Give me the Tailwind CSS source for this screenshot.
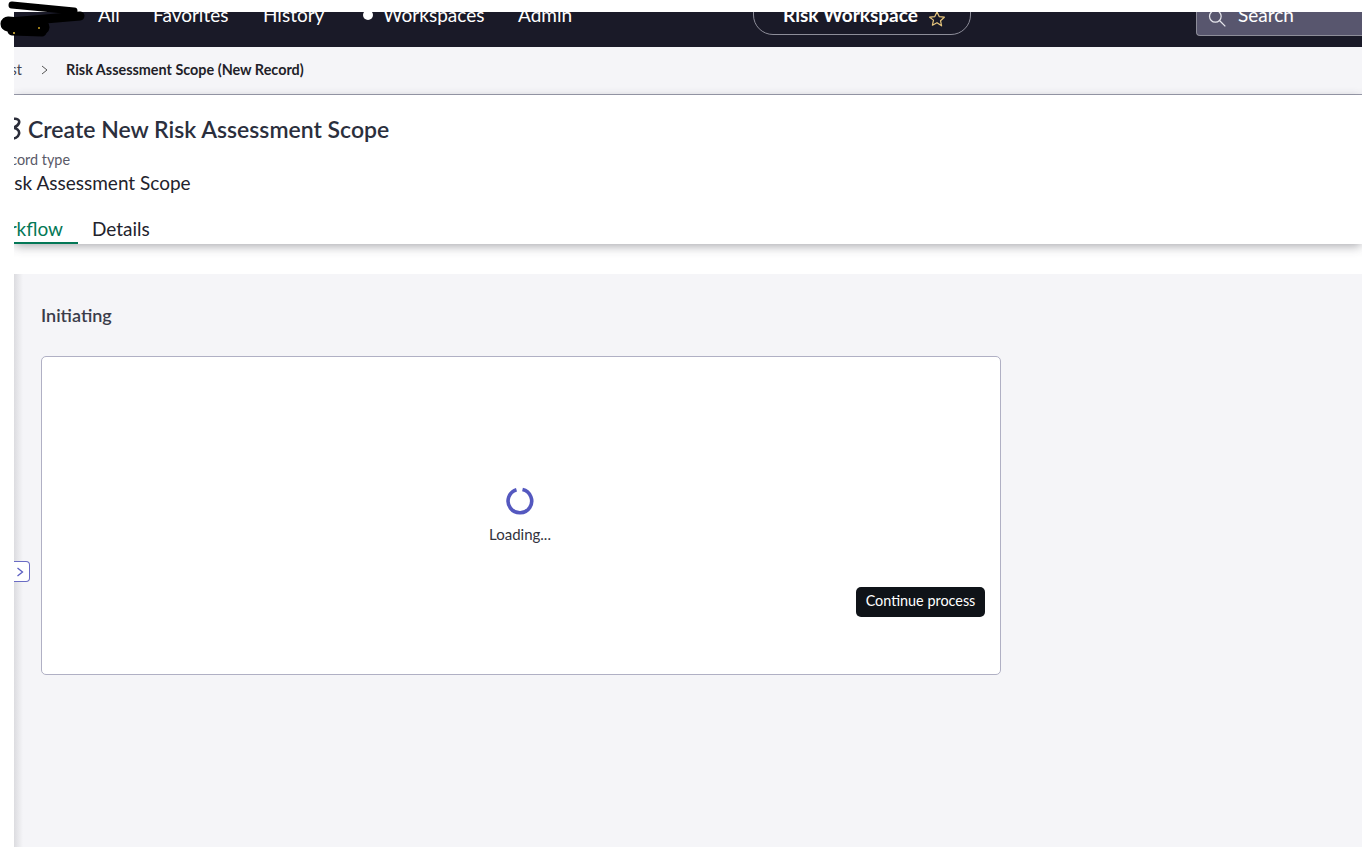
<!DOCTYPE html>
<html lang="en">
  <head>
    <meta charset="UTF-8" />
    <meta name="viewport" content="width=device-width, initial-scale=1.0" />
    <title>Create New Risk Assessment Scope</title>
    <script src="https://cdn.jsdelivr.net/npm/@tailwindcss/browser@4"></script>
  </head>
  <body class="bg-white font-['Lato','Liberation_Sans',sans-serif] h-[856px] overflow-hidden">
    <div class="relative pt-3 pl-[14px] h-[847px]">
      <div class="h-full flex flex-col overflow-hidden">
        <!-- Top nav, cut off at the top -->
        <div class="h-[35px] shrink-0 bg-[#1a1a28] overflow-hidden relative text-white text-[19px] leading-6">
          <div class="absolute left-[84px] top-[-9px] flex whitespace-nowrap">
            <span class="w-[55px]">All</span>
            <span class="w-[110px]">Favorites</span>
            <span class="w-[100px]">History</span>
            <span class="w-[155px] flex items-center"><span class="w-[10px] h-[10px] rounded-full bg-white mr-[10px]"></span>Workspaces</span>
            <span>Admin</span>
          </div>
          <div class="absolute left-[739px] top-[-20px] w-[218px] h-[43px] rounded-[20px] border border-[#8d8d99] flex items-end justify-center gap-[10px] pl-[5px] pb-[7px] font-bold">
            <span>Risk Workspace</span>
            <svg class="w-[18px] h-[18px] mb-[-1px]" viewBox="0 0 24 24" fill="none" stroke="#e8c77e" stroke-width="1.6" stroke-linejoin="round"><path d="M12 2.5l2.9 6.3 6.9.8-5.1 4.7 1.4 6.8L12 16.900 5.900 20.300l1.400-6.800L2.200 9.600l6.900-.8z"/></svg>
          </div>
          <div class="absolute left-[1182px] top-[-12px] w-[180px] h-[36px] rounded-bl-[4px] bg-[#58566e] border-l border-b border-[#8d8d99] flex items-end pl-[10px] pb-[8px] gap-[11px]">
            <svg class="w-[20px] h-[20px] mb-[-1px]" viewBox="0 0 24 24" fill="none" stroke="#e6e6ec" stroke-width="1.5"><circle cx="10" cy="10" r="7"/><path d="M15 15l7 7"/></svg>
            <span>Search</span>
          </div>
        </div>

        <!-- Breadcrumb -->
        <div class="h-[48px] shrink-0 bg-[#f5f5f8] border-b border-[#9a9cab] flex items-center pb-[2px] overflow-hidden text-[14.4px] whitespace-nowrap">
          <span class="ml-[-32px] w-[40px] text-[#44444f] text-right">List</span>
          <svg class="w-[10px] h-[10px] ml-[18px] mr-[16px]" viewBox="0 0 10 10" fill="none" stroke="#555" stroke-width="1"><path d="M2 1l5 4-5 4"/></svg>
          <span class="font-bold text-[#1f1f29]">Risk Assessment Scope (New Record)</span>
        </div>

        <!-- Record header -->
        <div class="h-[149px] shrink-0 bg-white relative shadow-[0_3px_10px_-1px_rgba(60,60,70,0.45)] z-10 whitespace-nowrap">
          <div class="absolute inset-0 overflow-hidden">
            <svg class="absolute left-[-7px] top-[22px] w-[16px] h-[24px]" viewBox="0 0 16 24" fill="none" stroke="#2b2d3a" stroke-width="2.600" stroke-linecap="round"><path d="M6 2c4-1 7 1 6 4-1 3-4 4-6 5 3 0 7 2 6 6-1 4-5 5-8 4"/></svg>
            <h1 class="absolute left-[14px] top-[18px] text-[23px] leading-8 font-semibold text-[#2b2f3d]">Create New Risk Assessment Scope</h1>
            <div class="absolute left-[-20px] top-[55px] text-[14.4px] leading-5 text-[#5a5a68]">Record type</div>
            <div class="absolute left-[-16px] top-[74px] text-[19px] leading-7 text-[#22222c]">Risk Assessment Scope</div>
            <div class="absolute left-[-36px] top-[120px] h-[29px] w-[100px] border-b-2 border-[#047857] text-[19px] leading-7 text-[#047857] text-right pr-[15px]">Workflow</div>
            <div class="absolute left-[78px] top-[120px] text-[19px] leading-7 text-[#22222c]">Details</div>
          </div>
        </div>

        <div class="h-[30px] shrink-0 bg-white"></div>

        <!-- Process area -->
        <div class="flex-1 bg-[#f5f5f8] relative pl-[27px] pt-[27px]">
          <div class="absolute left-0 top-0 bottom-0 w-[9px] bg-gradient-to-r from-[#dcdce0] to-[#f5f5f8]"></div>
          <button class="absolute left-0 top-[287px] w-[16px] h-[21px] bg-white border border-l-0 border-[#6a6cc4] rounded-r-[4px] flex items-center pl-[2px]">
            <svg class="w-[8px] h-[10px]" viewBox="0 0 8 10" fill="none" stroke="#5b5ec2" stroke-width="1.300"><path d="M1.500 1l5 4-5 4"/></svg>
          </button>
          <h2 class="text-lg leading-7 font-semibold text-[#3a3c4a]">Initiating</h2>
          <div class="mt-[27px] w-[960px] h-[319px] bg-white border border-[#b0b0c4] rounded-[5px] flex flex-col">
            <div class="mt-[130px] pr-[2px] flex flex-col items-center">
              <svg class="w-[28px] h-[28px]" viewBox="0 0 28 28" fill="none" stroke="#5458bf" stroke-width="3.600"><path d="M16.500 2.500A11.800 11.800 0 1 1 10.500 2.700"/></svg>
              <span class="mt-[9px] text-[15px] leading-5 text-[#33333d]">Loading...</span>
            </div>
            <div class="mt-[43px] mr-[15px] self-end">
              <button class="h-[30px] w-[129px] pb-[2px] rounded-[5px] bg-[#0f1318] text-white text-[14.4px]">Continue process</button>
            </div>
          </div>
        </div>
      </div>

      <!-- Redaction scribble over the logo -->
      <svg class="absolute left-0 top-0 w-[90px] h-[40px]" viewBox="0 0 90 40" fill="none" stroke="#000" stroke-linecap="round">
        <path d="M12 5L74 11" stroke-width="7"/>
        <path d="M10 22L80 16" stroke-width="9"/>
        <path d="M8 24L42 27" stroke-width="15"/>
        <path d="M12 31L42 32" stroke-width="9"/>
        <circle cx="14" cy="33" r="1" fill="#e8c040" stroke="none"/>
        <circle cx="39" cy="28" r="1" fill="#c8a020" stroke="none"/>
      </svg>
    </div>
  </body>
</html>
